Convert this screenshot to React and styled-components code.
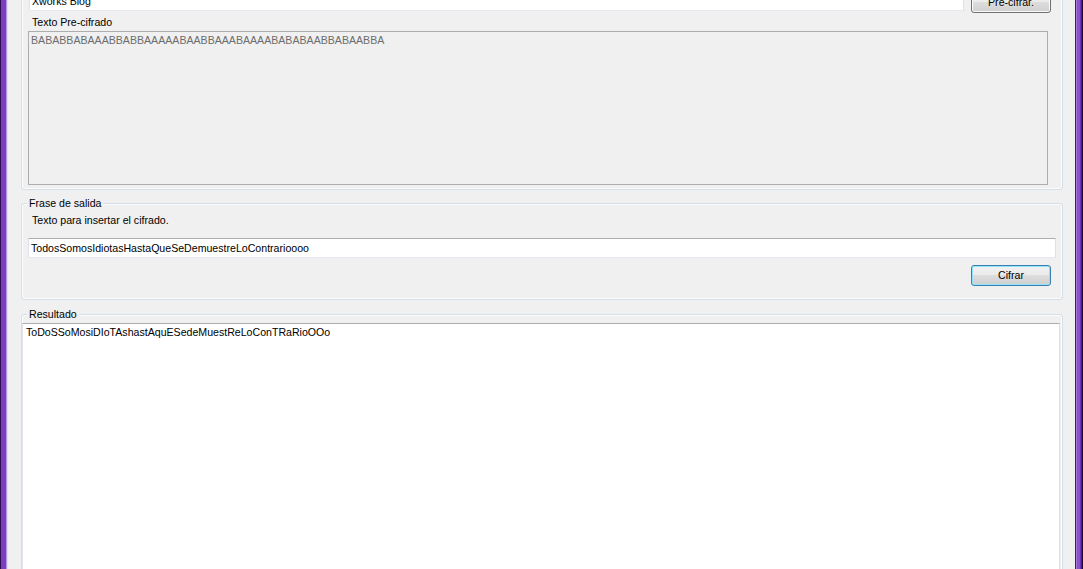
import styled, { createGlobalStyle } from 'styled-components';

const GlobalStyle = createGlobalStyle`
  html, body {
    margin: 0;
    padding: 0;
    overflow: hidden;
    background: #f0f0f0;
  }
  body {
    font-family: "Liberation Sans", Arial, sans-serif;
    font-size: 10.6px;
  }
`;

const Window = styled.div`
  display: flex;
  width: 1083px;
  height: 569px;
  overflow: hidden;
`;

const Frame = styled.div`
  flex: none;
  width: 8px;
  background: ${p => p.side === 'left'
    ? 'linear-gradient(to right, #2a0f48 0 1px, #7b3fc5 1px 6px, #b79ce0 6px 7px, #e4dcef 7px 8px)'
    : 'linear-gradient(to right, #3a1f5c 0 1px, #a37bdb 1px 2px, #8a50d0 2px 5px, #6d32b8 5px 6px, #4a1f85 6px 7px, #1b0a2e 7px 8px)'};
`;

const Client = styled.div`
  flex: 1;
  background: #f0f0f0;
  overflow: hidden;
  padding: 0 12px 0 13px;
`;

const Form = styled.div`
  display: flex;
  flex-direction: column;
  margin-top: -26px;
`;

const GroupBox = styled.div`
  position: relative;
  border: 1px solid #d5dfe5;
  border-radius: 3px;
  box-shadow: inset 0 0 0 1px #fbfcfd;
  margin-top: ${p => p.gap || 0}px;
  padding: ${p => p.pad};
  display: flex;
  flex-direction: column;
`;

const Legend = styled.span`
  position: absolute;
  top: -7px;
  left: 5px;
  padding: 0 2px;
  background: #f0f0f0;
  line-height: 13px;
  color: #000;
`;

const Row = styled.div`
  display: flex;
  align-items: flex-start;
  gap: 7px;
  padding: 0 11px 0 7px;
`;

const ButtonRow = styled.div`
  display: flex;
  justify-content: flex-end;
  padding-right: 11px;
  margin-top: ${p => p.gap || 0}px;
`;

const Label = styled.div`
  height: 13px;
  line-height: 13px;
  padding-left: 10px;
  margin-top: ${p => p.gap || 0}px;
  color: #000;
`;

const TextBox = styled.input`
  box-sizing: border-box;
  height: 20px;
  margin: ${p => p.m || 0};
  ${p => p.grow ? 'flex: 1;' : `width: ${p.w}px;`}
  padding: 0 2px;
  border: 1px solid;
  border-color: #abadb3 #dbdfe6 #e3e9ef #e2e3ea;
  background: #fff;
  font: inherit;
  color: #000;
  outline: none;
`;

const TextArea = styled.textarea`
  box-sizing: border-box;
  display: block;
  width: ${p => p.w}px;
  height: ${p => p.h}px;
  margin: ${p => p.m || 0};
  padding: 2px ${p => p.px || 2}px;
  border: 1px solid;
  border-color: ${p => p.disabledLook ? '#adadad' : '#abadb3 #dbdfe6 #e3e9ef #e2e3ea'};
  background: ${p => p.disabledLook ? '#f0f0f0' : '#fff'};
  color: ${p => p.disabledLook ? '#6d6d6d' : '#000'};
  font: inherit;
  line-height: 13px;
  resize: none;
  overflow: hidden;
  outline: none;
`;

const Button = styled.button`
  flex: none;
  box-sizing: border-box;
  width: 80px;
  height: 21px;
  margin-top: ${p => p.mt || 0}px;
  padding: 0;
  border: 1px solid ${p => p.focused ? '#3c7fb1' : '#707070'};
  border-radius: 3px;
  background: linear-gradient(#f2f2f2 0%, #ebebeb 45%, #dddddd 50%, #cfcfcf 100%);
  box-shadow: inset 0 0 0 1px ${p => p.focused ? '#8fe3fb' : '#fbfbfb'};
  font: inherit;
  color: #000;
  line-height: 19px;
`;

export default function App() {
  return (
    <>
      <GlobalStyle />
      <Window>
        <Frame side="left" />
        <Client>
          <Form>
            <GroupBox pad="15px 0 4px 0">
              <Row>
                <TextBox grow m="1px 0 0 0" defaultValue="Xworks Blog" />
                <Button mt={2}>Pre-cifrar.</Button>
              </Row>
              <Label gap={3}>Texto Pre-cifrado</Label>
              <TextArea
                disabledLook
                readOnly
                w={1020}
                h={154}
                m="2px 0 0 6px"
                value="BABABBABAAABBABBAAAAABAABBAAABAAAABABABAABBABAABBA"
              />
            </GroupBox>

            <GroupBox gap={13} pad="10px 0 13px 0">
              <Legend>Frase de salida</Legend>
              <Label>Texto para insertar el cifrado.</Label>
              <TextBox w={1028} m="11px 0 0 6px" defaultValue="TodosSomosIdiotasHastaQueSeDemuestreLoContrarioooo" />
              <ButtonRow gap={7}>
                <Button focused>Cifrar</Button>
              </ButtonRow>
            </GroupBox>

            <GroupBox gap={14} pad="8px 0 0 0">
              <Legend>Resultado</Legend>
              <TextArea
                readOnly
                w={1038}
                h={400}
                px={3}
                value="ToDoSSoMosiDIoTAshastAquESedeMuestReLoConTRaRioOOo"
              />
            </GroupBox>
          </Form>
        </Client>
        <Frame side="right" />
      </Window>
    </>
  );
}
